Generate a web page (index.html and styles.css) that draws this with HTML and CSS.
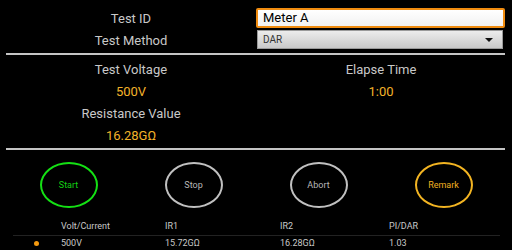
FILE: index.html
```html
<!DOCTYPE html>
<html>
<head>
<meta charset="utf-8">
<link rel="stylesheet" href="styles.css">
</head>
<body>
<div class="page">
  <section class="top">
    <div class="row r1">
      <div class="label">Test ID</div>
      <div class="ctl"><div class="input">Meter A</div></div>
    </div>
    <div class="row r2">
      <div class="label">Test Method</div>
      <div class="ctl"><div class="select"><span>DAR</span><span class="arrow"></span></div></div>
    </div>
  </section>
  <div class="divider d1"></div>
  <section class="mid">
    <div class="col">
      <div class="label">Test Voltage</div>
      <div class="value">500V</div>
      <div class="label">Resistance Value</div>
      <div class="value">16.28GΩ</div>
    </div>
    <div class="col">
      <div class="label">Elapse Time</div>
      <div class="value">1:00</div>
    </div>
  </section>
  <div class="divider d2"></div>
  <section class="buttons">
    <div class="bcell"><div class="btn start">Start</div></div>
    <div class="bcell"><div class="btn stop">Stop</div></div>
    <div class="bcell"><div class="btn abort">Abort</div></div>
    <div class="bcell"><div class="btn remark">Remark</div></div>
  </section>
  <section class="table">
    <div class="trow head">
      <div></div><div>Volt/Current</div><div>IR1</div><div>IR2</div><div>PI/DAR</div>
    </div>
    <div class="trow data">
      <div class="dotcell"><span class="dot"></span></div><div>500V</div><div>15.72GΩ</div><div>16.28GΩ</div><div>1.03</div>
    </div>
  </section>
</div>
</body>
</html>
```
FILE: styles.css
```css
html, body {
  margin: 0;
  padding: 0;
  background: #000;
}
body {
  width: 512px;
  height: 250px;
  overflow: hidden;
  font-family: Roboto, "Liberation Sans", sans-serif;
}
.page {
  padding: 0 6px;
}
.top {
  padding-top: 7px;
}
.row {
  display: flex;
  align-items: center;
}
.row > .label {
  width: 250px;
  text-align: center;
  padding-top: 2px;
}
.r1 { height: 22px; }
.r2 { height: 21px; }
.ctl {
  width: 250px;
}
.label {
  color: #c8c8c8;
  font-size: 13px;
  line-height: 22px;
}
.input {
  box-sizing: border-box;
  width: 249px;
  height: 20px;
  border: 2px solid #f08c10;
  border-radius: 2px;
  background: linear-gradient(#ffffff, #f2f2f2);
  color: #000;
  font-size: 13px;
  line-height: 16px;
  padding-left: 5px;
}
.select {
  box-sizing: border-box;
  width: 246px;
  height: 19px;
  margin-left: 1px;
  border: 1px solid #9a9a9a;
  background: linear-gradient(#ececec, #c9c9c9);
  color: #333;
  font-size: 10px;
  line-height: 17px;
  padding-left: 5px;
  display: flex;
  justify-content: space-between;
  align-items: center;
  padding-right: 9px;
}
.arrow {
  width: 0;
  height: 0;
  border-left: 4px solid transparent;
  border-right: 4px solid transparent;
  border-top: 4px solid #111;
}
.divider {
  height: 2px;
  background: #c4c4c4;
  width: 499px;
}
.d1 { margin-top: 3px; }
.mid {
  display: flex;
  padding-top: 4px;
  height: 89px;
}
.mid .col {
  width: 250px;
  text-align: center;
}
.value {
  color: #f2b22a;
  font-size: 13px;
  line-height: 22px;
}
.buttons {
  display: flex;
  padding-top: 12px;
}
.bcell {
  width: 125px;
  display: flex;
  justify-content: center;
}
.btn {
  box-sizing: border-box;
  width: 58px;
  height: 46px;
  border-radius: 50%;
  border: 2px solid #c0c0c0;
  display: flex;
  align-items: center;
  justify-content: center;
  font-size: 9px;
  color: #b8b8b8;
}
.btn.start { border-color: #14e014; color: #14d014; }
.btn.remark { border-color: #f2b422; color: #f0b020; }
.table {
  margin-top: 11px;
  margin-left: 7px;
  width: 487px;
}
.trow {
  display: grid;
  grid-template-columns: 48px 104px 115px 109px 111px;
  font-size: 9px;
  color: #c8c8c8;
}
.head {
  height: 16px;
  line-height: 14px;
  border-bottom: 1px solid #222;
}
.data {
  line-height: 15px;
}
.dotcell {
  display: flex;
  align-items: center;
  padding-left: 21px;
}
.dot {
  width: 5px;
  height: 5px;
  border-radius: 50%;
  background: #f59a10;
}
```
